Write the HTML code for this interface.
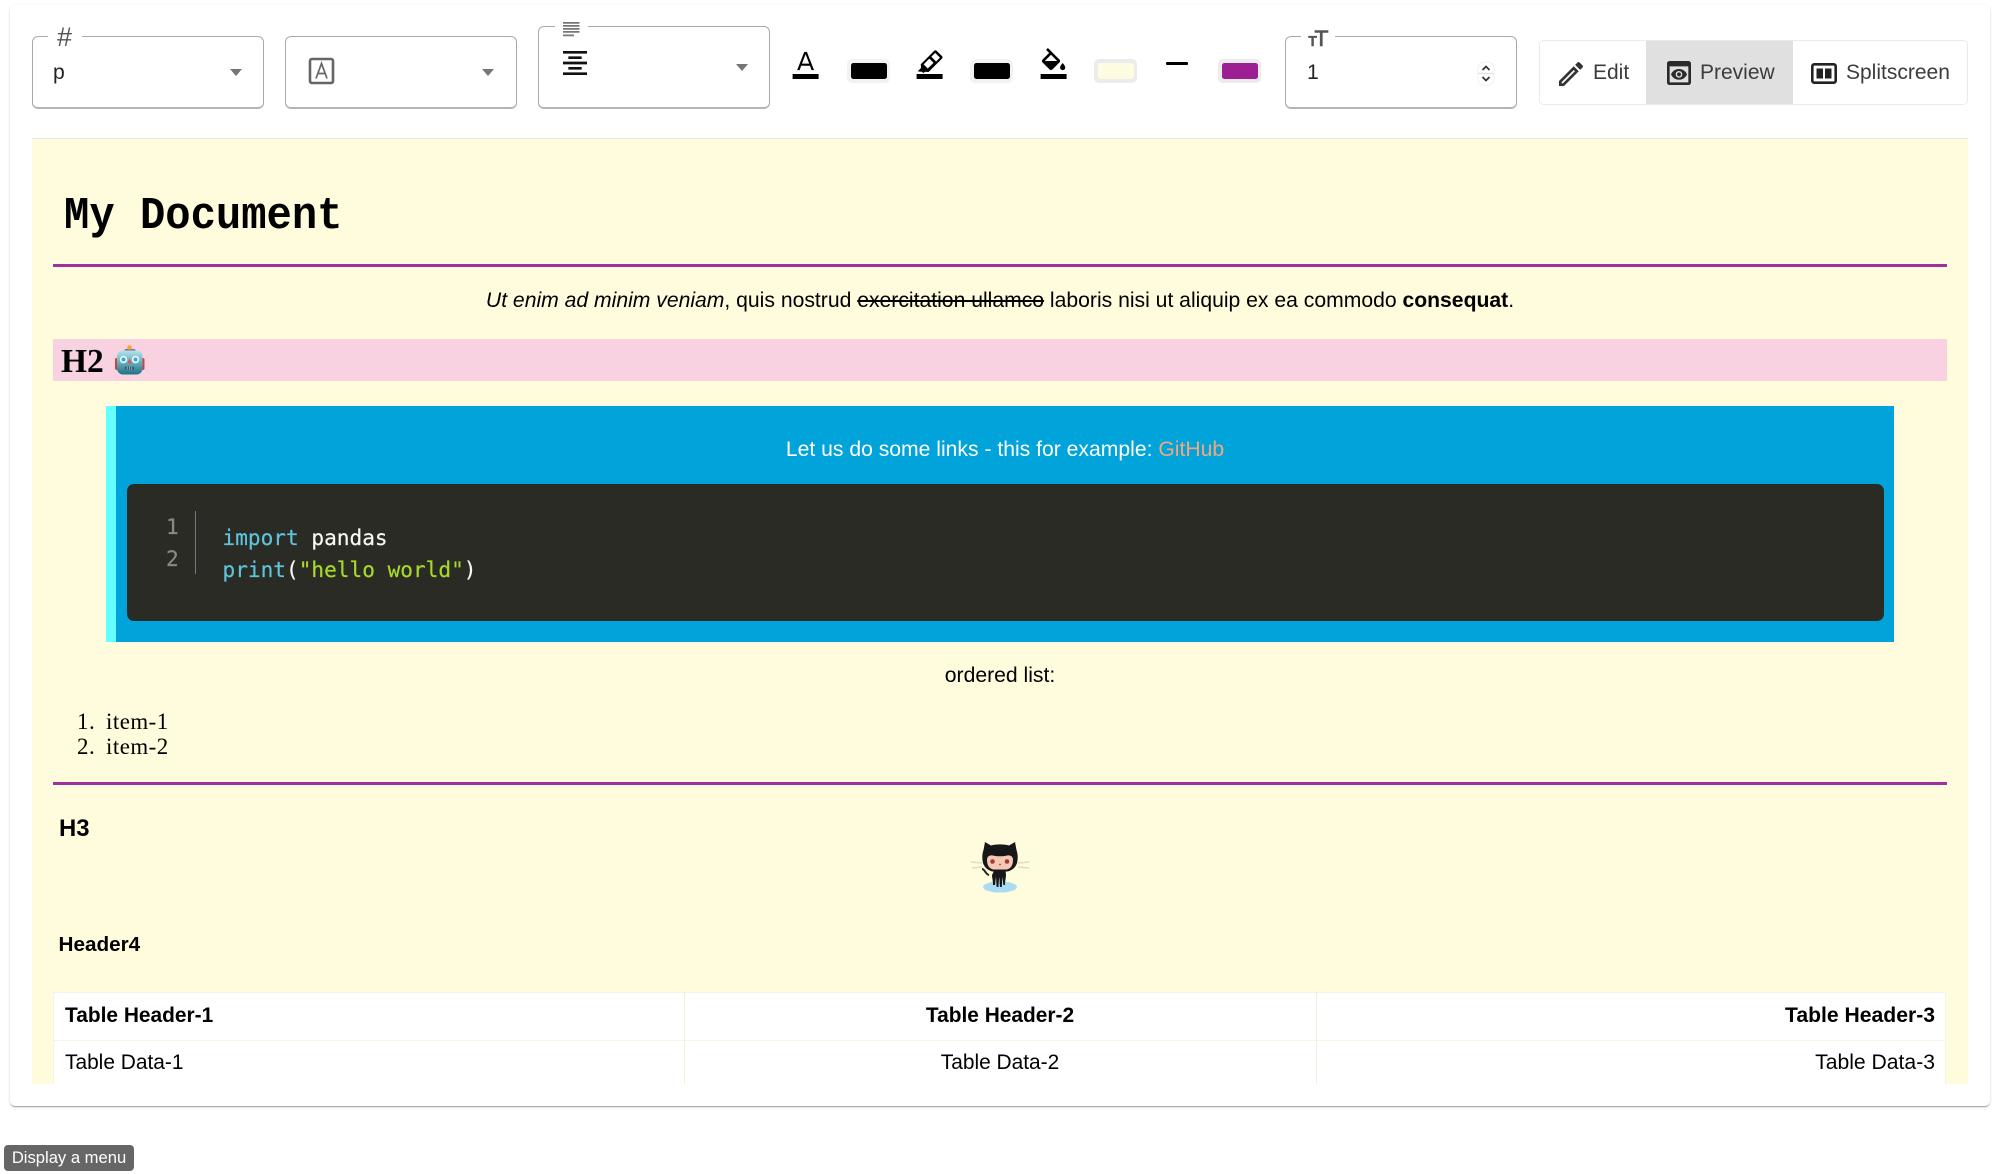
<!DOCTYPE html>
<html lang="en"><head><meta charset="utf-8"><title>My Document</title>
<style>
html,body{margin:0;padding:0;background:#fff;width:2000px;height:1174px;overflow:hidden;font-family:"Liberation Sans",Arial,sans-serif;color:#000}
.a,svg.a{position:absolute;display:block}
.t{position:absolute;white-space:nowrap;font-size:21.150px;line-height:30px}
.card{position:absolute;left:10px;top:5px;width:1980px;height:1101px;background:#fff;border-radius:5px;box-shadow:0 2px 1px -1px rgba(0,0,0,.2),0 1px 1px 0 rgba(0,0,0,.14),0 1px 3px 0 rgba(0,0,0,.12)}
.box{position:absolute;box-sizing:border-box;border:1.5px solid #a9a9a9;border-bottom:2px solid #b5b5b5;border-radius:6px;background:#fff}
.gap{position:absolute;background:#fff;height:5px}
.arr{position:absolute;width:0;height:0;border-left:6.5px solid transparent;border-right:6.5px solid transparent;border-top:7.5px solid #757575}
.sw{position:absolute;box-sizing:border-box;width:43px;height:24px;border-radius:5px;top:59px;background:#f2f2f2}
.sw i{position:absolute;left:3.5px;top:4px;width:36px;height:16px;border-radius:2.5px;display:block}
.hr{position:absolute;left:53px;width:1894px;height:3px;background:#a0309c}
.code{font-family:'DejaVu Sans Mono',monospace;font-size:21.100px;line-height:31px;-webkit-text-stroke:.2px currentColor}
.li{font-family:'Liberation Serif',serif;font-size:22.900px;line-height:26px;letter-spacing:.5px}
</style></head><body>
<div class="card"></div>

<!-- select 1 -->
<div class="box" style="left:32px;top:36px;width:232px;height:73px"></div>
<div class="gap" style="left:48px;top:33px;width:34px"></div>
<div class="t" style="left:57px;top:22px;font-size:27px;color:#555">#</div>
<div class="t" style="left:53px;top:58px;color:#222">p</div>
<div class="arr" style="left:229.5px;top:69px"></div>

<!-- select 2 -->
<div class="box" style="left:285px;top:36px;width:232px;height:73px"></div>
<svg class="a" style="left:308px;top:57px" width="27" height="28" viewBox="0 0 27 28"><rect x="2" y="2" width="23" height="24" rx="2" fill="none" stroke="#666" stroke-width="2.6"/><path d="M8 21.5 13.5 6.5 19 21.5M9.8 16.5h7.4" fill="none" stroke="#666" stroke-width="1.7"/></svg>
<div class="arr" style="left:482px;top:69px"></div>

<!-- select 3 -->
<div class="box" style="left:538px;top:26px;width:232px;height:83px"></div>
<div class="gap" style="left:555px;top:23px;width:33px"></div>
<svg class="a" style="left:563px;top:22px" width="17" height="15" viewBox="0 0 17 15"><path d="M0 0h16.500v1.800H0zM0 3h16.500v1.800H0zM0 6h16.500v1.800H0zM0 9h16.500v1.800H0zM0 12.500h11v1.800H0z" fill="#777"/></svg>
<svg class="a" style="left:559px;top:47px" width="32" height="32" viewBox="0 0 24 24"><path d="M7 15v2h10v-2H7zm-4 6h18v-2H3v2zm0-8h18v-2H3v2zm4-6v2h10V7H7zM3 3v2h18V3H3z" fill="#111"/></svg>
<div class="arr" style="left:735.500px;top:64px"></div>

<!-- colour tools -->
<svg class="a" style="left:790.400px;top:48px" width="31.200" height="31.200" viewBox="0 0 24 24"><path d="M2 20h20v4H2z M11 3 5.500 17h1.900l1.200-3.300h6.800l1.200 3.300h1.900L13 3h-2zm-1.800 9L12 4.800 14.800 12H9.200z" fill="#000"/></svg>
<div class="sw" style="left:847px"><i style="background:#000"></i></div>
<svg class="a" style="left:914.400px;top:48px" width="31.200" height="31.200" viewBox="0 0 24 24"><path d="M2 20h20v4H2z" fill="#000"/><path d="M2.800 18 5.400 15.400 5.200 12.500 15.500 2.200c.6-.6 1.400-.6 2 0l4 4c.6.600.6 1.400 0 2L11.200 18.500l-2.900-.2-.9.900-1.600-.9z" fill="#000"/><path d="M7.400 12.600 11.800 8.200 15 11.400 10.600 15.800zM13.300 6.700 15.900 4.100c.3-.3.500-.3.800 0l2.900 2.900c.3.300.3.500 0 .8l-2.600 2.600z" fill="#fff"/></svg>
<div class="sw" style="left:970px"><i style="background:#000"></i></div>
<svg class="a" style="left:1038.400px;top:48px" width="31.200" height="31.200" viewBox="0 0 24 24"><path d="M16.560 8.940 7.620 0 6.210 1.410l2.380 2.380-5.150 5.150c-.59.590-.59 1.540 0 2.120l5.500 5.500c.29.290.68.440 1.060.44s.77-.15 1.060-.44l5.500-5.500c.59-.58.59-1.530 0-2.120zM5.210 10 10 5.210 14.790 10H5.210zM19 11.500s-2 2.170-2 3.500c0 1.100.9 2 2 2s2-.9 2-2c0-1.330-2-3.500-2-3.500zM2 20h20v4H2v-4z" fill="#000"/></svg>
<div class="sw" style="left:1094px;background:#ececec"><i style="background:#fdfce0"></i></div>
<div class="a" style="left:1166px;top:61.500px;width:22px;height:3px;background:#000;border-radius:1px"></div>
<div class="sw" style="left:1218px;background:#ececec"><i style="background:#9c1f94"></i></div>

<!-- number input -->
<div class="box" style="left:1285px;top:36px;width:232px;height:73px"></div>
<div class="gap" style="left:1301px;top:33px;width:34px"></div>
<svg class="a" style="left:1305px;top:26px" width="25.500" height="25.500" viewBox="0 0 24 24"><path d="M9 4v2.300h5v12.700h2.600V6.300H22V4H9zM3 11.200h3V19h2.300v-7.800h3V9.300H3z" fill="#555"/></svg>
<div class="t" style="left:1307px;top:58px;color:#222">1</div>
<svg class="a" style="left:1477px;top:61px" width="18" height="25" viewBox="0 0 18 25"><rect x="1" y="1" width="16" height="23" rx="6" fill="#fff" stroke="#f0f0f0"/><path d="M1 12.500h16" stroke="#e4e4e4" stroke-width="1.500"/><path d="M5.500 9 9 5.500 12.500 9M5.500 16 9 19.500 12.500 16" fill="none" stroke="#333" stroke-width="1.700"/></svg>

<!-- toggle group -->
<div class="a" style="left:1539px;top:40px;width:429px;height:65px;box-sizing:border-box;border:1.500px solid #eaeaea;border-radius:5px;background:#fff"></div>
<div class="a" style="left:1646px;top:41px;width:147px;height:63px;background:#e0e0e0"></div>
<svg class="a" style="left:1555px;top:58px" width="32" height="32" viewBox="0 0 24 24"><path d="M14.060 9.020l.92.92L5.920 19H5v-.92l9.060-9.060M17.660 3c-.25 0-.51.100-.7.290l-1.830 1.830 3.750 3.750 1.830-1.830c.39-.39.39-1.020 0-1.410l-2.340-2.340c-.2-.2-.45-.29-.71-.29zm-3.600 3.190L3 17.250V21h3.750L17.810 9.940l-3.750-3.750z" fill="#333"/></svg>
<div class="t" style="left:1593px;top:58px;font-size:21px;color:#3c3c3c">Edit</div>
<svg class="a" style="left:1663px;top:57px" width="32" height="32" viewBox="0 0 24 24"><path d="M19 3H5c-1.110 0-2 .9-2 2v14c0 1.100.89 2 2 2h14c1.100 0 2-.9 2-2V5c0-1.100-.89-2-2-2zm0 16H5V7h14v12zm-5.500-6c0 .83-.67 1.500-1.500 1.500s-1.500-.67-1.500-1.500.67-1.500 1.500-1.500 1.500.67 1.500 1.500zM12 9c-2.730 0-5.060 1.660-6 4 .94 2.340 3.270 4 6 4s5.060-1.660 6-4c-.94-2.340-3.270-4-6-4zm0 6.500c-1.380 0-2.500-1.120-2.500-2.500s1.120-2.500 2.500-2.500 2.500 1.120 2.500 2.500-1.120 2.500-2.500 2.500z" fill="#2a2a2a"/></svg>
<div class="t" style="left:1700px;top:58px;font-size:21px;color:#3c3c3c">Preview</div>
<svg class="a" style="left:1811px;top:62px" width="26" height="23" viewBox="0 0 26 23"><rect x="1.300" y="2.300" width="23.400" height="18.400" rx="2" fill="none" stroke="#222" stroke-width="2.600"/><path d="M5.500 6.500h6.500v10H5.500zM14 6.500h6.500v10H14z" fill="#222"/></svg>
<div class="t" style="left:1846px;top:58px;font-size:21px;color:#3c3c3c">Splitscreen</div>

<!-- document -->
<div class="a" style="left:32px;top:138px;width:1936px;height:946px;background:#fefcdc;border-top:1px solid #e9e9e2;box-sizing:border-box;overflow:hidden"></div>

<div class="t" style="left:64px;top:191.500px;font-family:'Liberation Mono',monospace;font-weight:700;font-size:42.200px;line-height:50px;transform:scaleY(1.07);transform-origin:0 36px">My Document</div>
<div class="hr" style="top:264px"></div>

<div class="t" style="left:0;width:2000px;text-align:center;top:285.500px"><em>Ut enim ad minim veniam</em>, quis nostrud <s>exercitation ullamco</s> laboris nisi ut aliquip ex ea commodo <strong>consequat</strong>.</div>

<div class="a" style="left:53px;top:339px;width:1894px;height:42px;background:#f9d2e1"></div>
<div class="t" style="left:61px;top:342px;font-family:'Liberation Serif',serif;font-weight:700;font-size:33.500px;line-height:40px">H2</div>
<svg class="a" style="left:113px;top:343px" width="34" height="34" viewBox="113 343 34 34">
<defs><linearGradient id="rb" x1="0" y1="0" x2="0" y2="1"><stop offset="0" stop-color="#b4e3ea"/><stop offset=".55" stop-color="#5fa9b8"/><stop offset="1" stop-color="#1f6f85"/></linearGradient></defs>
<rect x="115" y="358" width="3" height="12" rx="1.500" fill="#c8483f"/><rect x="141.500" y="358" width="3" height="12" rx="1.500" fill="#c8483f"/>
<rect x="124.500" y="349" width="11" height="3" rx="1.500" fill="#7d68a8"/><circle cx="129.500" cy="347.500" r="2.300" fill="#f5a623"/>
<rect x="117" y="350.500" width="25.500" height="24" rx="6" fill="url(#rb)"/>
<circle cx="123.500" cy="359.500" r="3.700" fill="#e8fbff"/><circle cx="123.500" cy="359.500" r="2" fill="#39a6d6"/>
<circle cx="135.500" cy="359.500" r="3.700" fill="#e8fbff"/><circle cx="135.500" cy="359.500" r="2" fill="#39a6d6"/>
<path d="M129.500 358l2 5.500h-4z" fill="#d9534f"/>
<rect x="125" y="366.500" width="9" height="3.200" rx="1" fill="#35545e"/><path d="M127.200 366.500v3.200M129.500 366.500v3.200M131.800 366.500v3.200" stroke="#a9c6cc" stroke-width=".8"/>
</svg>

<!-- blue box -->
<div class="a" style="left:106px;top:406px;width:1788px;height:236px;background:#00a3da"></div>
<div class="a" style="left:106px;top:406px;width:10px;height:236px;background:#66ffff"></div>
<div class="t" style="left:111px;width:1788px;text-align:center;top:435px;color:#fff">Let us do some links - this for example: <span style="color:#f5a77c">GitHub</span></div>
<div class="a" style="left:127px;top:484px;width:1757px;height:137px;background:#2b2b26;border-radius:7px"></div>
<div class="a" style="left:195px;top:511px;width:1.200px;height:63px;background:#777"></div>
<div class="t code" style="left:166px;top:511.400px;color:#8a8a85">1</div>
<div class="t code" style="left:166px;top:543.400px;color:#8a8a85">2</div>
<div class="t code" style="left:222.500px;top:522.400px;color:#f8f8f2"><span style="color:#5ec4dc">import</span> pandas</div>
<div class="t code" style="left:222.500px;top:553.600px;color:#f8f8f2"><span style="color:#5ec4dc">print</span>(<span style="color:#a6d92a">"hello world"</span>)</div>

<div class="t" style="left:0;width:2000px;text-align:center;top:661px">ordered list:</div>

<div class="t li" style="left:77px;top:708.600px">1.</div>
<div class="t li" style="left:106px;top:708.600px">item-1</div>
<div class="t li" style="left:77px;top:733.600px">2.</div>
<div class="t li" style="left:106px;top:733.600px">item-2</div>

<div class="hr" style="top:782px"></div>

<div class="t" style="left:59px;top:814px;font-weight:700;font-size:23.900px">H3</div>

<!-- octocat -->
<svg class="a" style="left:965px;top:835px" width="70" height="62" viewBox="965 835 70 62">
<ellipse cx="1000" cy="887" rx="17" ry="5.500" fill="#a9dcf3"/>
<path d="M971 862l11 1M972 868l10-1M1018 863l11-1M1018 867l11 1" stroke="#dcdcc8" stroke-width="1.500" fill="none"/>
<path d="M982 869c3 0 3 5 7 6" fill="none" stroke="#222" stroke-width="2"/>
<path d="M985 842l6 3.500c5-1.500 13-1.500 18 0l6-3.500 1.500 8c1.500 4 1.500 9 .5 13-1.500 5-6 8-10 8.500h-14c-4-.5-8.500-3.500-10-8.500-1-4-1-9 .5-13z" fill="#17171a"/>
<path d="M987 860c0-4 3-5 6-4.500 4 1 10 1 14 0 3-.5 6 .5 6 4.500 0 6-3 9-6.500 9.500h-13c-3.500-.5-6.500-3.500-6.500-9.500z" fill="#f5c8b4"/>
<circle cx="992.500" cy="861.500" r="2.300" fill="#a63a3a"/><circle cx="1007" cy="861.500" r="2.300" fill="#a63a3a"/>
<circle cx="1000" cy="864.500" r=".9" fill="#a63a3a"/>
<path d="M994.500 870h11l.5 5c0 3-1 5-1 10h-1.600l-1-8-.6 10h-1.800l-.8-10-.8 10h-1.800l-.6-10-1 8H993c0-5-1-7-1-10z" fill="#17171a"/>
</svg>

<div class="t" style="left:58.500px;top:930px;font-weight:700;font-size:20.700px">Header4</div>

<!-- table -->
<div class="a" style="left:53px;top:992px;width:1893px;height:92px;background:#fff;overflow:hidden;border-left:1px solid #f4f4e4;border-right:1px solid #f4f4e4;border-top:1px solid #f4f4e4;box-sizing:border-box"></div>
<div class="a" style="left:54px;top:1039.500px;width:1892px;height:1.500px;background:#f5f5e6"></div>
<div class="a" style="left:684px;top:992px;width:1px;height:92px;background:#f0f0dc"></div>
<div class="a" style="left:1316px;top:992px;width:1px;height:92px;background:#f0f0dc"></div>
<div class="t" style="left:65px;top:1000.500px;font-weight:700;font-size:20.900px">Table Header-1</div>
<div class="t" style="left:684px;width:632px;text-align:center;top:1000.500px;font-weight:700;font-size:20.900px">Table Header-2</div>
<div class="t" style="right:65px;top:1000.500px;font-weight:700;font-size:21.150px">Table Header-3</div>
<div class="t" style="left:65px;top:1047.500px;font-size:20.900px">Table Data-1</div>
<div class="t" style="left:684px;width:632px;text-align:center;top:1047.500px;font-size:20.900px">Table Data-2</div>
<div class="t" style="right:65px;top:1047.500px;font-size:21.150px">Table Data-3</div>

<!-- bottom button -->
<div class="a" style="left:4px;top:1145px;width:130px;height:26px;background:#666;border-radius:4px;color:#fff;font-size:16.600px;line-height:26px;text-align:center;white-space:nowrap">Display a menu</div>
</body></html>
